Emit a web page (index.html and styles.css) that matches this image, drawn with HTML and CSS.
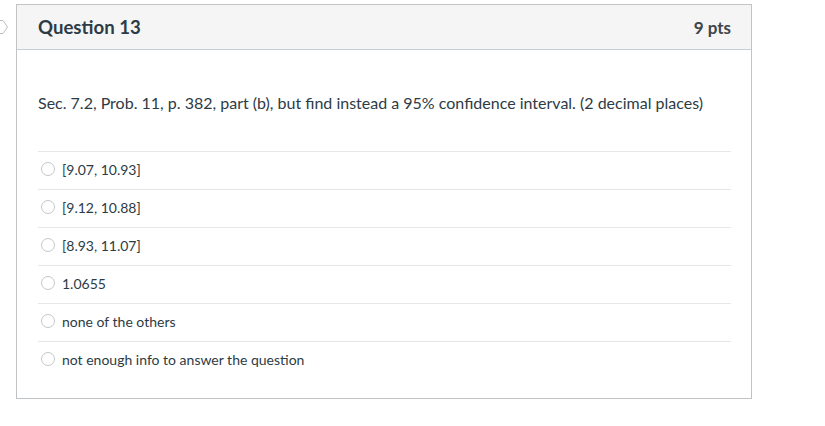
FILE: index.html
```html
<!DOCTYPE html>
<html>
<head>
<meta charset="utf-8">
<link rel="stylesheet" href="styles.css">
</head>
<body>
<div class="page">
  <svg class="flag" width="10" height="16" viewBox="0 0 10 16"><polygon points="-4,1.5 3,1.5 7.5,8 3,14.5 -4,14.5" fill="none" stroke="#b8bec2" stroke-width="1"/></svg>
  <div class="card">
    <div class="header">
      <span class="title">Question 13</span>
      <span class="pts">9 pts</span>
    </div>
    <div class="body">
      <p class="question">Sec. 7.2, Prob. 11, p. 382, part (b), but find instead a 95% confidence interval. (2 decimal places)</p>
      <div class="answers">
        <label class="answer"><span class="radio"></span><span>[9.07, 10.93]</span></label>
        <label class="answer"><span class="radio"></span><span>[9.12, 10.88]</span></label>
        <label class="answer"><span class="radio"></span><span>[8.93, 11.07]</span></label>
        <label class="answer"><span class="radio"></span><span>1.0655</span></label>
        <label class="answer"><span class="radio"></span><span>none of the others</span></label>
        <label class="answer"><span class="radio"></span><span>not enough info to answer the question</span></label>
      </div>
    </div>
  </div>
</div>
</body>
</html>
```
FILE: styles.css
```css
html, body {
  margin: 0;
  padding: 0;
  background: #fff;
}
body {
  font-family: Lato, "Open Sans", sans-serif;
  color: #2d3b45;
}
.page {
  position: relative;
  padding: 4px 0 0 16px;
}
.flag {
  position: absolute;
  left: 0;
  top: 19px;
}
.card {
  width: 734px;
  border: 1px solid #c0c4c7;
  box-sizing: content-box;
}
.header {
  height: 44px;
  background: #f5f5f5;
  border-bottom: 1px solid #c7cdd1;
  display: flex;
  align-items: center;
  justify-content: space-between;
  padding: 0 20px 0 21px;
}
.title {
  font-size: 18.6px;
  font-weight: 700;
}
.pts {
  font-size: 17px;
  font-weight: 700;
  color: #3d454b;
}
.body {
  padding: 41px 20px 19px 21px;
}
.question {
  margin: 0;
  font-size: 16px;
  line-height: 24px;
}
.answers {
  margin-top: 36px;
}
.answer {
  display: flex;
  align-items: center;
  height: 38px;
  box-sizing: border-box;
  border-top: 1px solid #e5e7e8;
  font-size: 14px;
  padding: 0 0 3px 3px;
}
.radio {
  width: 14px;
  height: 14px;
  border: 1px solid #c4c8cb;
  border-radius: 50%;
  margin-right: 7px;
  box-sizing: border-box;
  background: #fff;
}
```
